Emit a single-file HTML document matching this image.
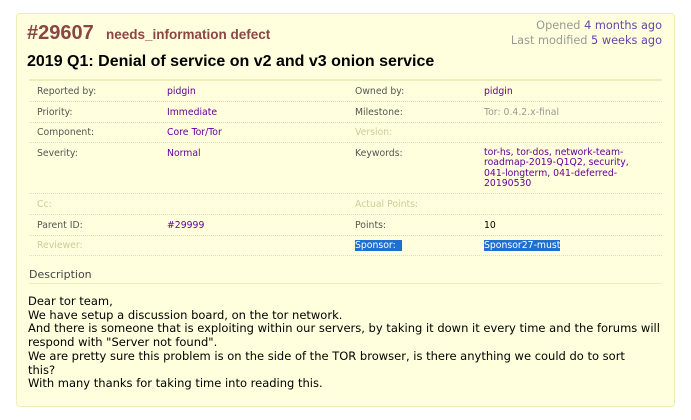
<!DOCTYPE html>
<html><head><meta charset="utf-8"><style>
body{margin:0;width:691px;height:420px;background:#fff;position:relative;overflow:hidden;font-family:"DejaVu Sans","Liberation Sans",sans-serif;}
.box{position:absolute;left:16px;top:13px;width:659px;height:394px;background:#ffffdd;border:1px solid #eeeebb;border-radius:4px;box-sizing:border-box;}
.a{position:absolute;white-space:nowrap;}
.id{left:27px;top:22px;font:bold 20px "Liberation Sans",sans-serif;color:#8b4545;}
.st{left:106px;top:27px;font:bold 13.5px "Liberation Sans",sans-serif;color:#8b4545;}
.sum{left:27px;top:53px;font:bold 16px "Liberation Sans",sans-serif;color:#000;}
.dt{font-size:11.3px;color:#999;right:29px;text-align:right;}
.dt span{color:#6644aa;}
.hr{position:absolute;left:29px;width:633px;height:0;border-top:2px solid #eeeebb;}
.dot{position:absolute;left:29px;width:633px;border-top:1px dotted #ddddbb;}
.f{font-size:9.3px;position:absolute;white-space:nowrap;}
.l{color:#555;}.v{color:#660099;}.g{color:#cccc99;}
.sel{background:#1e6fd0;color:#fff;}
.desc{left:29px;top:268px;font-size:11px;color:#444;}
.body{position:absolute;left:28px;top:295px;font-size:11.5px;line-height:13.7px;color:#000;width:660px;white-space:nowrap;}
</style></head><body>
<div class="box"></div>
<div class="a id">#29607</div>
<div class="a st">needs_information defect</div>
<div class="a sum">2019 Q1: Denial of service on v2 and v3 onion service</div>
<div class="a dt" style="top:19px">Opened <span>4 months ago</span></div>
<div class="a dt" style="top:34px">Last modified <span>5 weeks ago</span></div>
<div class="hr" style="top:79px"></div>

<div class="f l" style="left:37px;top:86px">Reported by:</div><div class="f v" style="left:167px;top:86px">pidgin</div>
<div class="f l" style="left:355px;top:86px">Owned by:</div><div class="f v" style="left:484px;top:86px">pidgin</div>
<div class="dot" style="top:101px"></div>
<div class="f l" style="left:37px;top:107px">Priority:</div><div class="f v" style="left:167px;top:107px">Immediate</div>
<div class="f l" style="left:355px;top:107px">Milestone:</div><div class="f" style="left:484px;top:107px;color:#999">Tor: 0.4.2.x-final</div>
<div class="dot" style="top:122px"></div>
<div class="f l" style="left:37px;top:127px">Component:</div><div class="f v" style="left:167px;top:127px">Core Tor/Tor</div>
<div class="f g" style="left:355px;top:127px">Version:</div>
<div class="dot" style="top:142px"></div>
<div class="f l" style="left:37px;top:148px">Severity:</div><div class="f v" style="left:167px;top:148px">Normal</div>
<div class="f l" style="left:355px;top:148px">Keywords:</div>
<div class="f v" style="left:484px;top:148px;line-height:10.3px;white-space:normal;width:180px">tor-hs, tor-dos, network-team-<br>roadmap-2019-Q1Q2, security,<br>041-longterm, 041-deferred-<br>20190530</div>
<div class="dot" style="top:193px"></div>
<div class="f g" style="left:37px;top:199px">Cc:</div>
<div class="f g" style="left:355px;top:199px">Actual Points:</div>
<div class="dot" style="top:214px"></div>
<div class="f l" style="left:37px;top:220px">Parent ID:</div><div class="f v" style="left:167px;top:220px">#29999</div>
<div class="f l" style="left:355px;top:220px">Points:</div><div class="f" style="left:484px;top:220px;color:#000">10</div>
<div class="dot" style="top:235px"></div>
<div class="f g" style="left:37px;top:240px">Reviewer:</div>
<div class="f sel" style="left:355px;top:240px;width:47px">Sponsor:</div>
<div class="f sel" style="left:484px;top:240px">Sponsor27-must</div>
<div class="dot" style="top:255px"></div>

<div class="a desc">Description</div>
<div class="hr" style="top:283px;border-top-width:1px"></div>
<div class="body">Dear tor team,<br>We have setup a discussion board, on the tor network.<br>And there is someone that is exploiting within our servers, by taking it down it every time and the forums will<br>respond with "Server not found".<br>We are pretty sure this problem is on the side of the TOR browser, is there anything we could do to sort<br>this?<br>With many thanks for taking time into reading this.</div>
</body></html>
